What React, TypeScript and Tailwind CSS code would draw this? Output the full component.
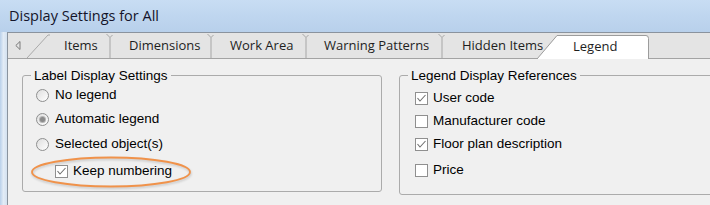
import React from "react";

const tabs = [
  { label: "Items", w: "w-[60px]", pad: "pl-[14px]", sep: false },
  { label: "Dimensions", w: "w-[101px]", pad: "pl-[19px]", sep: true },
  { label: "Work Area", w: "w-[95px]", pad: "pl-[19px]", sep: true },
  { label: "Warning Patterns", w: "w-[136px]", pad: "pl-[18px]", sep: true },
  { label: "Hidden Items", w: "w-[95px]", pad: "pl-[20px]", sep: true },
];

function Radio({ checked }: { checked?: boolean }) {
  return (
    <span className="w-[13px] h-[13px] rounded-full border border-[#8e8f8f] bg-linear-to-br from-[#dedede] to-white flex items-center justify-center shrink-0">
      {checked && <span className="w-[5px] h-[5px] rounded-full bg-[#8a8a8a] ring-1 ring-[#b5b5b5]" />}
    </span>
  );
}

function Check({ checked }: { checked?: boolean }) {
  return (
    <span className="w-[13px] h-[13px] border border-[#8f8f8f] bg-white shrink-0 flex items-center justify-center">
      {checked && (
        <svg width="11" height="11" viewBox="0 0 11 11">
          <path d="M1.5 5 L4 8 L9.5 2" fill="none" stroke="#6f6f6f" strokeWidth="1.1" />
        </svg>
      )}
    </span>
  );
}

function Row({ h, children }: { h: string; children: React.ReactNode }) {
  return <div className={`flex items-center ${h}`}>{children}</div>;
}

export default function App() {
  return (
    <div className="relative w-[710px] h-[205px] overflow-hidden flex flex-col bg-[#f0f0f0] font-['Liberation_Sans',Arial,sans-serif] text-[13.5px] text-black">
      {/* title bar */}
      <div className="h-[32px] shrink-0 flex items-center pl-[9px] pb-[1px] bg-linear-to-b from-[#c8ddf3] via-[#bfd6ef] to-[#b8d0eb]">
        <span className="font-['Open_Sans',sans-serif] text-[14.5px] text-[#14142a]">Display Settings for All</span>
      </div>

      <div className="flex flex-1 min-w-0">
        {/* window frame */}
        <div className="w-[7px] shrink-0 bg-linear-to-r from-[#b9d0ea] via-[#e3ecf6] to-[#d3e1f0]" />

        <div className="flex-1 min-w-0 flex flex-col border-l border-t border-[#8a939e]">
          {/* tab strip */}
          <div className="h-[26px] shrink-0 flex items-end bg-[#e4e4e4] border-b border-[#a3a3a3] font-['Open_Sans',sans-serif] text-[13px] text-[#1e1e1e]">
            <div className="w-[19px] shrink-0 h-full flex items-center justify-center">
              <svg width="6" height="9" viewBox="0 0 6 9">
                <path d="M5 0.5 L0.8 4.5 L5 8.5 Z" fill="none" stroke="#7a7a7a" strokeWidth="1" />
              </svg>
            </div>
            <svg width="23" height="25" viewBox="0 0 23 25" className="shrink-0">
              <path d="M0 25 L21 2 L23 2" fill="none" stroke="#a9a9a9" strokeWidth="1" />
            </svg>
            {tabs.map((t) => (
              <div key={t.label} className={`relative shrink-0 h-full flex items-center ${t.w} ${t.pad}`}>
                {t.sep && (
                  <svg width="8" height="25" viewBox="0 0 8 25" className="absolute left-[-4px] top-0">
                    <path d="M0.5 1 L4 4.5 L4 25 M4 4.5 L6.5 2" fill="none" stroke="#a6a6a6" strokeWidth="1" />
                  </svg>
                )}
                <span className="whitespace-nowrap">{t.label}</span>
              </div>
            ))}
            <div className="relative z-10 shrink-0 w-[112px] h-[24px] -mb-px flex items-center pl-[36px]">
              <svg width="112" height="24" viewBox="0 0 112 24" className="absolute inset-0">
                <path d="M0 24 L20 1 L109 1 Q111.5 1 111.5 3.5 L111.5 24 Z" fill="#ffffff" />
                <path d="M0 24 L20 0.5 L109 0.5 Q111.5 0.5 111.5 3.5 L111.5 24" fill="none" stroke="#9c9c9c" strokeWidth="1" />
              </svg>
              <span className="relative">Legend</span>
            </div>
          </div>

          {/* page */}
          <div className="flex-1 flex gap-[17px] pt-[9px] pl-[14px] bg-[#f0f0f0]">
            <fieldset className="w-[360px] h-[124px] shrink-0 border border-[#ababab] rounded-[3px] pl-[8px]">
              <legend className="px-[3px] leading-[15px]">Label Display Settings</legend>
              <div className="ml-[5px]">
                <Row h="h-[24px]">
                  <Radio />
                  <span className="ml-[6px]">No legend</span>
                </Row>
                <Row h="h-[25px]">
                  <Radio checked />
                  <span className="ml-[6px]">Automatic legend</span>
                </Row>
                <Row h="h-[24px]">
                  <Radio />
                  <span className="ml-[6px]">Selected object(s)</span>
                </Row>
                <Row h="h-[30px]">
                  <span className="ml-[19px]" />
                  <Check checked />
                  <span className="ml-[5px]">Keep numbering</span>
                </Row>
              </div>
            </fieldset>

            <fieldset className="w-[330px] h-[127px] shrink-0 border border-[#ababab] rounded-[3px] pl-[8px]">
              <legend className="px-[3px] leading-[15px]">Legend Display References</legend>
              <div className="ml-[7px] mt-[3px]">
                <Row h="h-[25px]">
                  <Check checked />
                  <span className="ml-[5px]">User code</span>
                </Row>
                <Row h="h-[21px]">
                  <Check />
                  <span className="ml-[5px]">Manufacturer code</span>
                </Row>
                <Row h="h-[25px]">
                  <Check checked />
                  <span className="ml-[5px]">Floor plan description</span>
                </Row>
                <Row h="h-[27px]">
                  <Check />
                  <span className="ml-[5px]">Price</span>
                </Row>
              </div>
            </fieldset>
          </div>
        </div>
      </div>

      {/* annotation ellipse */}
      <svg width="170" height="38" viewBox="0 0 170 38" className="absolute left-[28px] top-[154px] pointer-events-none">
        <defs>
          <filter id="sh" x="-10%" y="-30%" width="120%" height="160%">
            <feGaussianBlur stdDeviation="1.2" />
          </filter>
        </defs>
        <ellipse cx="83.5" cy="19.5" rx="79" ry="14.5" fill="none" stroke="rgba(0,0,0,0.18)" strokeWidth="2" filter="url(#sh)" />
        <ellipse cx="83" cy="18" rx="79" ry="14.5" fill="none" stroke="#f0924a" strokeWidth="1.8" />
      </svg>
    </div>
  );
}
